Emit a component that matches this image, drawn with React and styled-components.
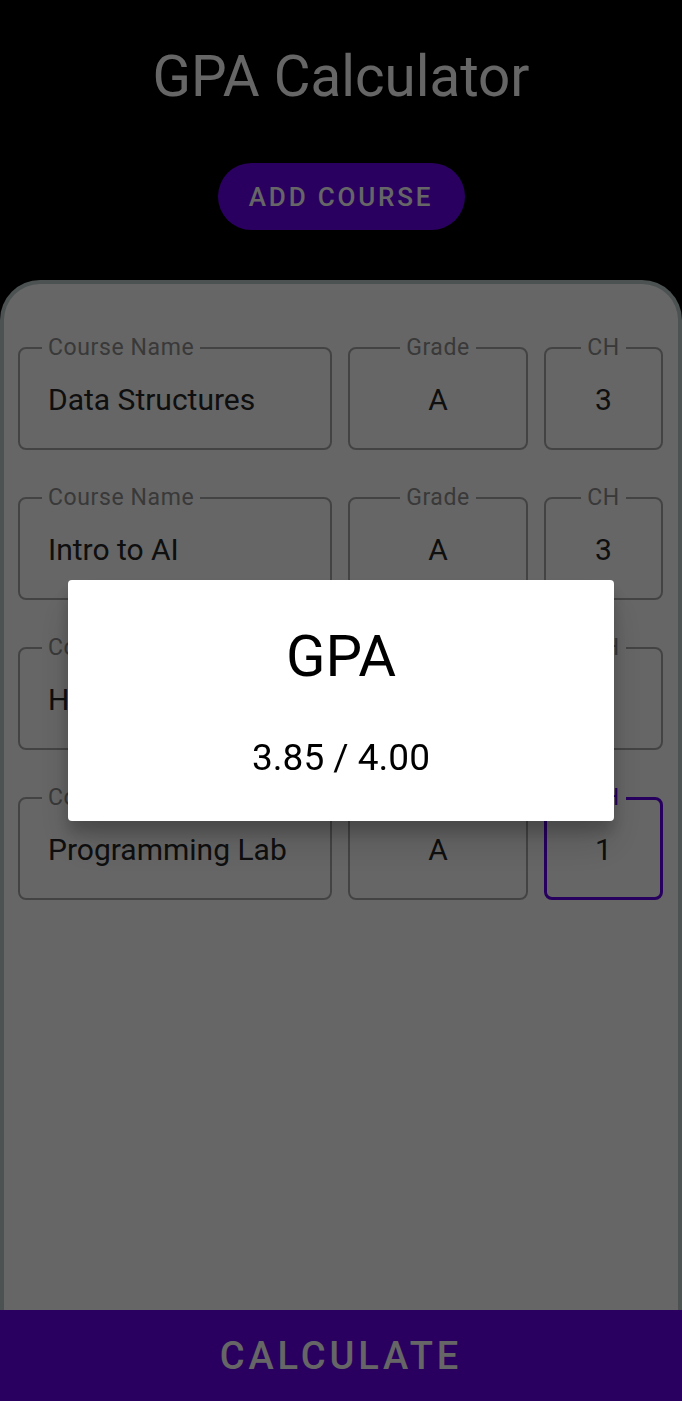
import React from 'react';
import styled, { createGlobalStyle } from 'styled-components';

const GlobalStyle = createGlobalStyle`
    html, body {
        margin: 0;
        padding: 0;
        background: #000;
    }
    body {
        font-family: Roboto, 'Noto Sans', 'Liberation Sans', sans-serif;
    }
    * {
        box-sizing: border-box;
    }
`;

const Screen = styled.div`
    width: 682px;
    height: 1401px;
    display: flex;
    flex-direction: column;
    background: #000;
    overflow: hidden;
`;

const Header = styled.header`
    display: flex;
    flex-direction: column;
    align-items: center;
    padding-top: 42px;
`;

const Title = styled.h1`
    margin: 0;
    font-size: 56.5px;
    line-height: 70px;
    font-weight: 400;
    color: #ffffff;
`;

const AddButton = styled.button`
    margin: 51px 0 50px;
    width: 247px;
    height: 67px;
    border: none;
    border-radius: 34px;
    background: #6800f0;
    color: #ffffff;
    font-family: inherit;
    font-size: 26px;
    font-weight: 500;
    letter-spacing: 2.8px;
    text-transform: uppercase;
`;

const Card = styled.main`
    flex: 1;
    background: #ffffff;
    border: 4px solid #bdcbcb;
    border-bottom: none;
    border-radius: 40px 40px 0 0;
    padding: 52px 15px 0 14px;
    display: flex;
    flex-direction: column;
    gap: 36px;
`;

const Row = styled.div`
    display: grid;
    grid-template-columns: 314px 180px 119px;
    column-gap: 16px;
`;

const Field = styled.fieldset`
    margin: 0;
    min-width: 0;
    height: 114px;
    border: ${(p) => (p.$focused ? '3px solid #6200ee' : '2px solid #a9a9a9')};
    border-radius: 8px;
    padding: 0 22px ${(p) => (p.$focused ? '7px' : '8px')};
`;

const Label = styled.legend`
    margin: ${(p) => (p.$center ? '0 auto' : '0')};
    padding: 0 6px;
    font-size: 23px;
    line-height: 24px;
    letter-spacing: 0.6px;
    color: ${(p) => (p.$focused ? '#6200ee' : '#8e8e8e')};
`;

const Value = styled.div`
    height: 80px;
    line-height: 80px;
    padding-left: ${(p) => (p.$center ? '0' : '6px')};
    text-align: ${(p) => (p.$center ? 'center' : 'left')};
    font-size: 30px;
    color: #262626;
    white-space: nowrap;
    overflow: hidden;
`;

const CalculateBar = styled.button`
    height: 91px;
    width: 100%;
    border: none;
    background: #6600ee;
    color: #ffffff;
    font-family: inherit;
    font-size: 38px;
    font-weight: 500;
    letter-spacing: 3.9px;
    text-transform: uppercase;
`;

const Overlay = styled.div`
    position: fixed;
    inset: 0;
    background: rgba(0, 0, 0, 0.6);
    display: flex;
    align-items: center;
    justify-content: center;
`;

const Dialog = styled.div`
    width: 546px;
    height: 241px;
    background: #ffffff;
    border-radius: 4px;
    box-shadow: 0 11px 15px rgba(0, 0, 0, 0.2), 0 24px 38px rgba(0, 0, 0, 0.14);
    display: flex;
    flex-direction: column;
    align-items: center;
    padding-top: 42px;
`;

const DialogTitle = styled.h2`
    margin: 0;
    font-size: 58px;
    line-height: 68px;
    font-weight: 400;
    color: #000;
`;

const DialogValue = styled.p`
    margin: 46px 0 0;
    font-size: 37px;
    line-height: 44px;
    color: #000;
`;

const courses = [
    { name: 'Data Structures', grade: 'A', ch: '3' },
    { name: 'Intro to AI', grade: 'A', ch: '3' },
    { name: 'History', grade: 'B+', ch: '3' },
    { name: 'Programming Lab', grade: 'A', ch: '1', focused: true },
];

function CourseRow({ course }) {
    return (
        <Row>
            <Field>
                <Label>Course Name</Label>
                <Value>{course.name}</Value>
            </Field>
            <Field>
                <Label $center>Grade</Label>
                <Value $center>{course.grade}</Value>
            </Field>
            <Field $focused={course.focused}>
                <Label $center $focused={course.focused}>CH</Label>
                <Value $center>{course.ch}</Value>
            </Field>
        </Row>
    );
}

export default function App() {
    return (
        <>
            <GlobalStyle />
            <Screen>
                <Header>
                    <Title>GPA Calculator</Title>
                    <AddButton>Add Course</AddButton>
                </Header>
                <Card>
                    {courses.map((c) => (
                        <CourseRow key={c.name} course={c} />
                    ))}
                </Card>
                <CalculateBar>Calculate</CalculateBar>
            </Screen>
            <Overlay>
                <Dialog>
                    <DialogTitle>GPA</DialogTitle>
                    <DialogValue>3.85 / 4.00</DialogValue>
                </Dialog>
            </Overlay>
        </>
    );
}
